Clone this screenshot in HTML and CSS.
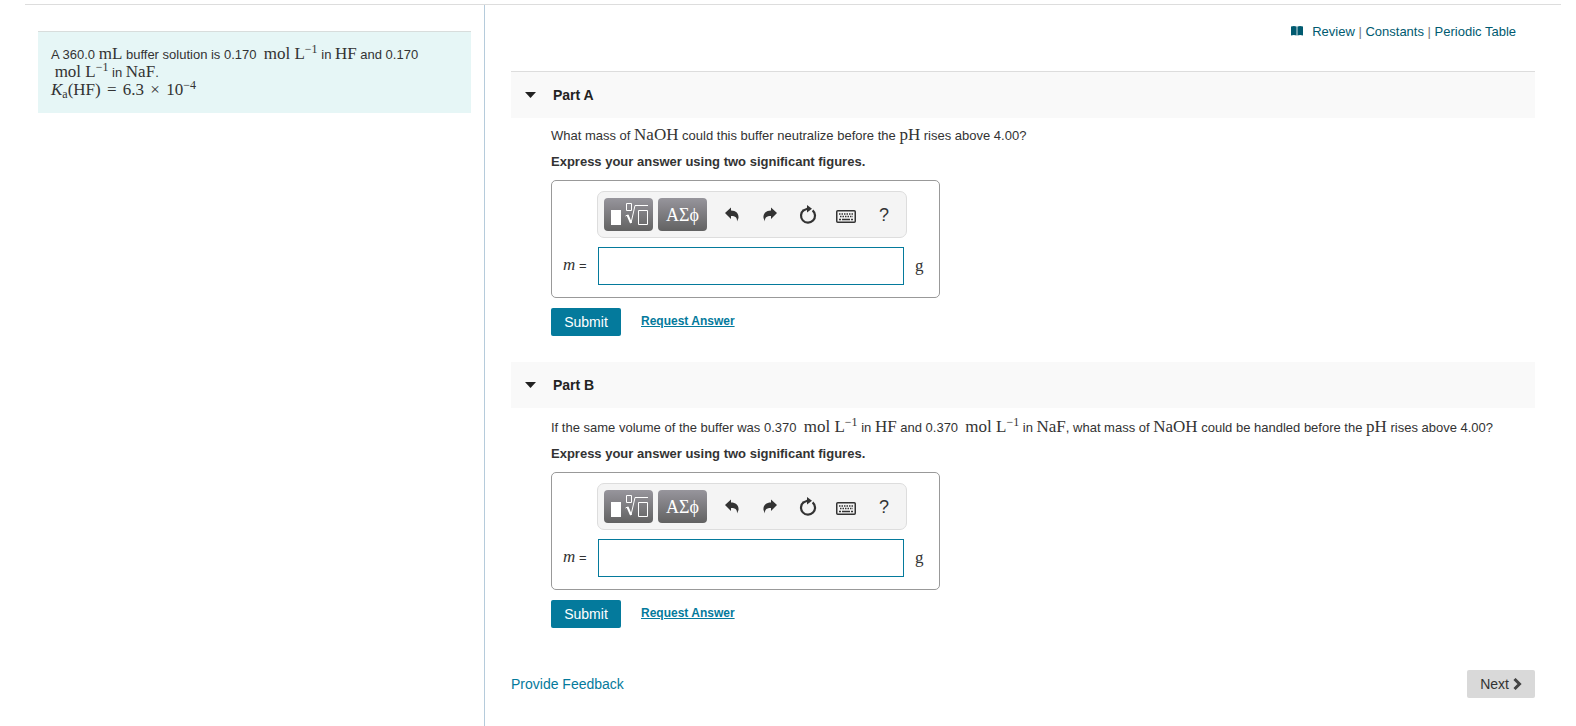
FILE: index.html
```
<!DOCTYPE html>
<html lang="en">
<head>
<meta charset="utf-8">
<title>Buffer capacity</title>
<link rel="stylesheet" href="styles.css">
</head>
<body>
<svg class="sprite" aria-hidden="true">
  <symbol id="i-template" viewBox="0 0 49 33"><path d="M7 12h10v15H7z" fill="#fff"/><g fill="none" stroke="#fff"><path d="M22.500 5.500h5v7h-5zM34.500 12.500h9v14h-9z"/><path d="M21.500 18l2-1 3.500 8L31 7.500h13"/><path d="M23.500 17l3.500 8" stroke-width="2"/></g></symbol>
  <symbol id="i-undo" viewBox="0 0 14 15"><path d="M0 6L6 .5V3.500c5 0 8 3 7.500 7.500L12 14.500c.3-4-1.500-5.500-6-5.500v3z" fill="currentColor"/></symbol>
  <symbol id="i-reset" viewBox="0 0 18 20"><path d="M4.700 5.200A7 7 0 1 0 13.600 5.400" fill="none" stroke="currentColor" stroke-width="2.200"/><path d="M8 0l5 3.700L8 7.500V5L4.500 6.500 3.500 4.800 8 2.800z" fill="currentColor"/></symbol>
  <symbol id="i-keyboard" viewBox="0 0 20 13"><rect x=".75" y=".75" width="18.500" height="11.500" rx="1" fill="none" stroke="currentColor" stroke-width="1.500"/><path d="M3 4h14M4 6.500h13" stroke="currentColor" stroke-width="1.500" stroke-dasharray="1.500 1"/><path d="M3 9.500h2M6 9.500h8M15 9.500h2" stroke="currentColor" stroke-width="1.500"/></symbol>
  <symbol id="i-book" viewBox="0 0 12 10"><path d="M0 .5Q3-.3 5.600.5V9.500Q3 8.700 0 9.500zM6.400.5Q9-.3 12 .5V9.500Q9 8.700 6.400 9.500z" fill="currentColor"/></symbol>
  <symbol id="i-next" viewBox="0 0 9 12"><path d="M1.500 1L6.500 6l-5 5" fill="none" stroke="currentColor" stroke-width="3"/></symbol>
</svg>
<div class="page">
  <aside class="side">
    <div class="intro">A 360.0 <span class="m">mL</span> buffer solution is 0.170 &nbsp;<span class="m">mol L<sup>−1</sup></span> in <span class="m">HF</span> and 0.170<br>&nbsp;<span class="m">mol L<sup>−1</sup></span> in <span class="m">NaF</span>.<br><span class="m"><i>K</i><sub>a</sub>(HF) <span class="op">=</span> 6.3 <span class="op">×</span> 10<sup>−4</sup></span></div>
  </aside>
  <main class="main">
    <nav class="links"><svg class="book"><use href="#i-book"/></svg><a href="#">Review</a> | <a href="#">Constants</a> | <a href="#">Periodic Table</a></nav>

    <section class="part">
      <h2 class="head first"><span class="caret"></span>Part A</h2>
      <div class="body">
        <p class="question">What mass of <span class="m">NaOH</span> could this buffer neutralize before the <span class="m">pH</span> rises above 4.00?</p>
        <p class="hint">Express your answer using two significant figures.</p>
        <div class="answer">
          <div class="tools">
            <button class="key" aria-label="Templates"><svg><use href="#i-template"/></svg></button>
            <button class="key">ΑΣϕ</button>
            <button class="tool" aria-label="Undo"><svg class="arrow"><use href="#i-undo"/></svg></button>
            <button class="tool" aria-label="Redo"><svg class="arrow flip"><use href="#i-undo"/></svg></button>
            <button class="tool" aria-label="Reset"><svg class="reset"><use href="#i-reset"/></svg></button>
            <button class="tool" aria-label="Keyboard shortcuts"><svg class="keyboard"><use href="#i-keyboard"/></svg></button>
            <button class="tool">?</button>
          </div>
          <label class="label" for="mass-a"><i class="m">m</i> =</label>
          <input class="field" id="mass-a" type="text">
          <span class="m unit">g</span>
        </div>
        <div class="actions"><button class="submit">Submit</button><a class="request" href="#">Request Answer</a></div>
      </div>
    </section>

    <section class="part">
      <h2 class="head"><span class="caret"></span>Part B</h2>
      <div class="body later">
        <p class="question">If the same volume of the buffer was 0.370 &nbsp;<span class="m">mol L<sup>−1</sup></span> in <span class="m">HF</span> and 0.370 &nbsp;<span class="m">mol L<sup>−1</sup></span> in <span class="m">NaF</span>, what mass of <span class="m">NaOH</span> could be handled before the <span class="m">pH</span> rises above 4.00?</p>
        <p class="hint">Express your answer using two significant figures.</p>
        <div class="answer">
          <div class="tools">
            <button class="key" aria-label="Templates"><svg><use href="#i-template"/></svg></button>
            <button class="key">ΑΣϕ</button>
            <button class="tool" aria-label="Undo"><svg class="arrow"><use href="#i-undo"/></svg></button>
            <button class="tool" aria-label="Redo"><svg class="arrow flip"><use href="#i-undo"/></svg></button>
            <button class="tool" aria-label="Reset"><svg class="reset"><use href="#i-reset"/></svg></button>
            <button class="tool" aria-label="Keyboard shortcuts"><svg class="keyboard"><use href="#i-keyboard"/></svg></button>
            <button class="tool">?</button>
          </div>
          <label class="label" for="mass-b"><i class="m">m</i> =</label>
          <input class="field" id="mass-b" type="text">
          <span class="m unit">g</span>
        </div>
        <div class="actions"><button class="submit">Submit</button><a class="request" href="#">Request Answer</a></div>
      </div>
    </section>

    <footer class="foot"><a href="#">Provide Feedback</a><button class="next">Next <svg><use href="#i-next"/></svg></button></footer>
  </main>
</div>
</body>
</html>
```
FILE: styles.css
```
* { box-sizing: border-box; }
body { margin: 0; background: #fff; color: #333; font: 13px/18px "Liberation Sans", Arial, sans-serif; }
button, input { font: inherit; color: inherit; }
button { border: 0; padding: 0; background: none; cursor: pointer; }
.sprite { position: absolute; width: 0; height: 0; }
.page { display: flex; min-height: calc(100vh - 4px); margin: 4px 15px 0 25px; border-top: 1px solid #ddd; }
.side { flex: 0 0 460px; padding: 26px 13px 0 13px; border-right: 1px solid #b5cbdb; }
.intro { padding: 14px 13px 13px; border-top: 1px solid #d8dddc; background: #e6f6f6; white-space: nowrap; }
.m { font-family: "Liberation Serif", "Times New Roman", serif; font-size: 17px; line-height: 0; }
.op { margin: 0 2px; }
sup, sub { font-size: 12px; line-height: 0; }
sup { vertical-align: 6px; }
sub { vertical-align: -3px; }
.main { flex: 1; min-width: 0; padding: 18px 26px 28px; }
.links { padding-right: 19px; text-align: right; color: #777; }
.links a { color: #005a70; text-decoration: none; }
.book { width: 12px; height: 10px; margin-right: 9px; color: #005a70; }
.head { display: flex; align-items: center; height: 46px; margin: 0; padding-left: 14px; background: #f9f9f9; color: #222; font-size: 14px; line-height: 18px; }
.first { height: 47px; margin-top: 30px; border-top: 1px solid #ddd; }
.caret { width: 11px; height: 6px; margin-right: 17px; background: #222; clip-path: polygon(0 0, 100% 0, 50% 100%); }
.body { padding: 9px 0 26px 40px; }
.later { padding-top: 11px; }
.question { margin: 0 0 8px; }
.hint { margin: 0 0 9px; font-weight: bold; }
.answer { display: grid; grid-template-columns: 35px 306px 1fr; width: 389px; height: 118px; padding: 10px 0 0 11px; border: 1px solid #999; border-radius: 5px; align-items: center; align-content: start; row-gap: 9px; }
.tools { grid-column: 2 / 4; display: flex; align-items: center; width: 310px; height: 47px; margin-left: -1px; padding-left: 6px; border: 1px solid #ddd; border-radius: 7px; background: #f4f4f4; }
.key { width: 49px; height: 33px; margin-right: 5px; border-radius: 4px; background: linear-gradient(#97959c, #626262); color: #fff; font: 18px/30px "Liberation Serif", "Times New Roman", serif; }
.key + .tool { margin-left: 1px; }
.key svg { display: block; width: 49px; height: 33px; }
.tool { display: flex; align-items: center; justify-content: center; width: 38px; height: 33px; font-size: 18px; }
.arrow { width: 14px; height: 15px; }
.flip { transform: scaleX(-1); }
.reset { width: 18px; height: 20px; }
.keyboard { width: 20px; height: 13px; margin-top: 4px; }
.field { width: 306px; height: 38px; padding: 0 8px; border: 1px solid #047a9c; background: #fff; }
.unit { padding-left: 11px; }
.actions { display: flex; align-items: flex-start; margin-top: 10px; }
.submit { width: 70px; height: 28px; margin-right: 20px; border-radius: 2px; background: #047a9c; color: #fff; font-size: 14px; }
.request { padding-top: 4px; color: #047a9c; font-size: 12px; font-weight: bold; }
.foot { display: flex; align-items: center; justify-content: space-between; margin-top: 16px; font-size: 14px; }
.foot a { color: #047a9c; text-decoration: none; }
.next { width: 68px; height: 28px; border-radius: 2px; background: #d9d9d9; }
.next svg { width: 9px; height: 12px; color: #444; vertical-align: -1px; }
```
